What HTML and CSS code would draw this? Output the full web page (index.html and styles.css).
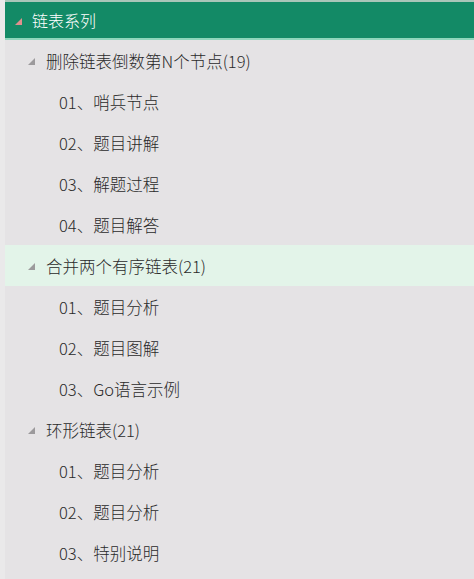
FILE: index.html
```html
<!DOCTYPE html>
<html>

<head>
  <meta charset="utf-8" />
  <link rel="stylesheet" href="styles.css">
</head>

<body>
  <div class="panel">
    <div class="head">
      <span class="arrow arrow-head"></span>
      <span>链表系列</span>
    </div>
    <ul class="tree">
      <li class="node">
        <div class="row level1"><span class="arrow"></span>删除链表倒数第N个节点(19)</div>
        <ul>
          <li class="row level2">01、哨兵节点</li>
          <li class="row level2">02、题目讲解</li>
          <li class="row level2">03、解题过程</li>
          <li class="row level2">04、题目解答</li>
        </ul>
      </li>
      <li class="node">
        <div class="row level1 active"><span class="arrow"></span>合并两个有序链表(21)</div>
        <ul>
          <li class="row level2">01、题目分析</li>
          <li class="row level2">02、题目图解</li>
          <li class="row level2">03、Go语言示例</li>
        </ul>
      </li>
      <li class="node">
        <div class="row level1"><span class="arrow"></span>环形链表(21)</div>
        <ul>
          <li class="row level2">01、题目分析</li>
          <li class="row level2">02、题目分析</li>
          <li class="row level2">03、特别说明</li>
        </ul>
      </li>
    </ul>
  </div>
</body>
</html>
```

FILE: styles.css
```css
html,
body {
  margin: 0;
  padding: 0;
  height: 100%;
  background-color: #eae9ea;
}

body {
  font-family: "Noto Sans CJK SC", "Noto Sans", sans-serif;
  font-weight: 300;
  color: #2a2a2a;
  overflow: hidden;
}

.panel {
  margin-left: 5px;
  min-height: 100%;
  background-color: #e5e3e5;
}

ul,
li {
  list-style: none;
  margin: 0;
  padding: 0;
}

.head {
  display: flex;
  align-items: center;
  height: 36px;
  padding-left: 10px;
  border-top: 2px solid #a9c6b9;
  border-bottom: 2px solid #8fd6bc;
  background-color: #138a66;
  color: #fff;
  font-size: 16px;
}

.arrow {
  display: inline-block;
  width: 0;
  height: 0;
  border-style: solid;
  border-width: 0 0 7px 7px;
  border-color: transparent transparent #9c9a9c transparent;
  margin-right: 11px;
  position: relative;
  top: 1px;
}

.arrow-head {
  border-bottom-color: #e0908e;
  margin-right: 10px;
}

.row {
  display: flex;
  align-items: center;
  height: 41px;
  font-size: 16.5px;
  white-space: nowrap;
}

.row.level1 {
  padding-left: 23px;
}

.row.level2 {
  padding-left: 54px;
}

.row.active {
  background-color: #e3f4e9;
}
```
